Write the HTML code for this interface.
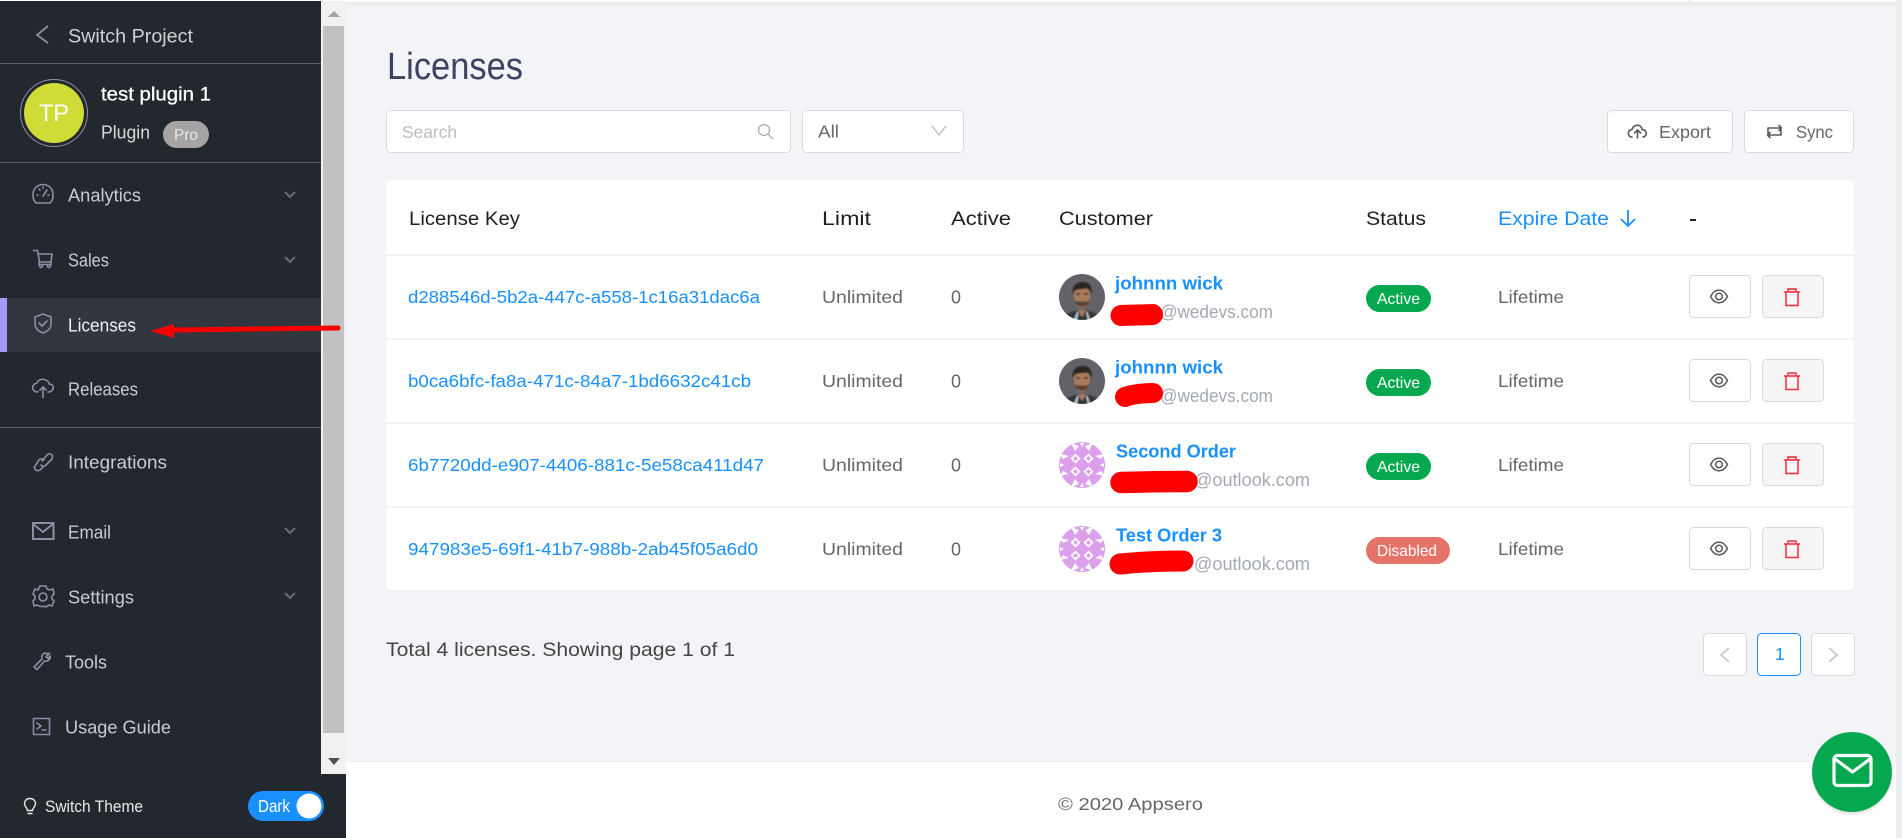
<!DOCTYPE html>
<html lang="en"><head><meta charset="utf-8"><title>Licenses</title>
<style>
html,body{margin:0;padding:0;width:1902px;height:838px;overflow:hidden;background:#f3f4f8}
svg{display:block}
text{font-family:"Liberation Sans",sans-serif;white-space:pre}
.n{font-size:18.500px;fill:#c9cbd2}
.h{font-size:19.500px;fill:#1f1f1f}
.k{font-size:17.500px;fill:#1890ff}
.b{font-size:17.500px;fill:#666}
.nm{font-size:18px;fill:#1890ff;font-weight:700}
.em{font-size:18px;fill:#a3a9b3}
.bd{font-size:16px;fill:#fff}
.ic{fill:none;stroke:#8d8ea6;stroke-width:1.6;stroke-linecap:round;stroke-linejoin:round}
.cv{fill:none;stroke:#6b6d76;stroke-width:2}
.btn{fill:#fff;stroke:#d9d9d9}
.gi{fill:none;stroke:#595959;stroke-width:1.6;stroke-linecap:round;stroke-linejoin:round}
</style></head><body>
<svg width="1902" height="838" viewBox="0 0 1902 838" xmlns="http://www.w3.org/2000/svg">
<defs>
<clipPath id="a1"><circle cx="23" cy="23" r="23"/></clipPath>
<linearGradient id="sh" x1="0" y1="0" x2="0" y2="1"><stop offset="0" stop-color="#e6e6e8"/><stop offset="1" stop-color="#f3f4f8"/></linearGradient>
<filter id="soft" x="-5%" y="-5%" width="110%" height="110%"><feGaussianBlur stdDeviation="0.7"/></filter>
<g id="photo" clip-path="url(#a1)">
<rect width="46" height="46" fill="#626268"/>
<g filter="url(#soft)">
<path d="M4 46L6 41L15 37L31 37L40 41L42 46Z" fill="#33383c"/>
<path d="M15 46L18 38L19.500 38L18 46ZM29 46L27 38L28.500 38L31 46Z" fill="#c5cfd2"/>
<path d="M19 36H27L24 42H22Z" fill="#a87a5c"/>
<ellipse cx="23" cy="22" rx="8" ry="12" fill="#a87a5c"/>
<path d="M13.500 20C13 11 18 8 24 8C31 8 33.500 13 32.500 21C31.500 17 30 15 27 14.500C22 15.500 18 15 15.500 17C15 18 14.500 19 13.500 20Z" fill="#2a2523"/>
<path d="M15.500 26C17 35 29 35 30.500 26C28.500 28 26 27.500 23 27.500C20 27.500 17.500 28 15.500 26Z" fill="#5a4334"/>
<path d="M17 20h4M25 20h4" stroke="#33261f" stroke-width="1.500"/>
</g>
</g>
<g id="ident" clip-path="url(#a1)">
<rect width="46" height="46" fill="#dc9fec"/>
<g fill="#fff">
<path d="M16.500 11.500l5 5-5 5-5-5zM29.500 11.500l5 5-5 5-5-5z"/>
<path d="M16.500 24.500l5 5-5 5-5-5zM29.500 24.500l5 5-5 5-5-5z"/>
<path d="M1 12L10 14L4 17ZM45 12L36 14L42 17ZM1 34L10 32L4 29ZM45 34L36 32L42 29Z"/>
<path d="M12 1L16 9L20 4ZM34 1L30 9L26 4ZM12 45L16 37L20 42ZM34 45L30 37L26 42Z"/>
<path d="M1 21l4 2-4 2zM45 21l-4 2 4 2zM21 1l2 4 2-4zM21 45l2-4 2 4z"/>
</g>
<g fill="#dc9fec"><path d="M16.500 14l2.500 2.500-2.500 2.500-2.500-2.500zM29.500 14l2.500 2.500-2.500 2.500-2.500-2.500zM16.500 27l2.500 2.500-2.500 2.500-2.500-2.500zM29.500 27l2.500 2.500-2.500 2.500-2.500-2.500z"/></g>
</g>
<g id="eye" class="gi" style="stroke-width:1.500"><path d="M-8.500 0C-4-8.500 4-8.500 8.500 0C4 8.500-4 8.500-8.500 0Z"/><circle cx="0" cy="0" r="3.300"/></g>
<g id="trash" fill="none" stroke="#ff2a3a" stroke-width="1.500"><path d="M-8-5H8M-6-5V8.500H6V-5M-4-5V-8H4V-5"/></g>
</defs>

<!-- main background -->
<rect x="346" y="0" width="1556" height="838" fill="#f3f4f8"/>
<rect x="346" y="0" width="1556" height="9" fill="url(#sh)"/>
<rect x="346" y="0" width="1556" height="2" fill="#fff"/>
<rect x="1689" y="0" width="1" height="2" fill="#d8d8d8"/>
<rect x="1896" y="0" width="6" height="838" fill="#efefef"/>

<!-- sidebar -->
<rect width="346" height="838" fill="#23272e"/>
<rect width="346" height="1" fill="#fff"/>
<rect x="321" y="1" width="25" height="773" fill="#f1f1f1"/>
<rect x="323" y="26" width="21" height="707" fill="#c1c1c1"/>
<path d="M328 17l6-6 6 6z" fill="#a3a3a3"/>
<path d="M328 758l6 7 6-7z" fill="#505050"/>
<rect y="63" width="321" height="1" fill="#5a5d6c"/>
<rect y="162" width="321" height="1" fill="#5a5d6c"/>
<rect y="427" width="321" height="1" fill="#62656e"/>

<path d="M48 26L37 35L48 43" fill="none" stroke="#8d8ea6" stroke-width="1.800"/>
<text x="68" y="42.500" textLength="125" lengthAdjust="spacingAndGlyphs" style="font-size:19px;fill:#d0d1d6">Switch Project</text>
<circle cx="54" cy="113" r="33.500" fill="none" stroke="#8f90a6" stroke-width="1"/>
<circle cx="54" cy="113" r="30" fill="#cfdb37"/>
<text x="39" y="121" textLength="30" lengthAdjust="spacingAndGlyphs" style="font-size:24px;fill:#fff">TP</text>
<text x="101" y="100.500" textLength="110" lengthAdjust="spacingAndGlyphs" style="font-size:19.500px;fill:#fff;stroke:#fff;stroke-width:.3">test plugin 1</text>
<text x="101" y="138.500" textLength="49" lengthAdjust="spacingAndGlyphs" style="font-size:18.500px;fill:#d8d9dd">Plugin</text>
<rect x="163" y="121" width="46" height="27" rx="13.500" fill="#a5a3a3"/>
<text x="174" y="140" textLength="24" lengthAdjust="spacingAndGlyphs" style="font-size:16px;fill:#e8e8e8">Pro</text>

<rect y="298" width="321" height="54" fill="#32363f"/>
<rect y="298" width="7" height="54" fill="#a29bfd"/>

<text class="n" x="68" y="201.500" textLength="73" lengthAdjust="spacingAndGlyphs">Analytics</text>
<text class="n" x="68" y="266.500" textLength="41" lengthAdjust="spacingAndGlyphs">Sales</text>
<text x="68" y="331.500" textLength="68" lengthAdjust="spacingAndGlyphs" style="font-size:18.500px;fill:#f0f0f2">Licenses</text>
<text class="n" x="68" y="395.500" textLength="70" lengthAdjust="spacingAndGlyphs">Releases</text>
<text class="n" x="68" y="468.500" textLength="99" lengthAdjust="spacingAndGlyphs">Integrations</text>
<text class="n" x="68" y="538.500" textLength="43" lengthAdjust="spacingAndGlyphs">Email</text>
<text class="n" x="68" y="603.500" textLength="66" lengthAdjust="spacingAndGlyphs">Settings</text>
<text class="n" x="65" y="668.500" textLength="42" lengthAdjust="spacingAndGlyphs">Tools</text>
<text class="n" x="65" y="733.500" textLength="106" lengthAdjust="spacingAndGlyphs">Usage Guide</text>

<path class="cv" d="M285 192l5 5 5-5M285 257l5 5 5-5M285 528l5 5 5-5M285 593l5 5 5-5"/>

<!-- analytics -->
<g class="ic"><path d="M36 203C33 200 33 197 33 194.500C33 188 38 184.500 43 184.500C48 184.500 53 188 53 194.500C53 198 53 200 50 203Z"/><path d="M43 196L47 190M37 195h1M48 195h1M39 189l1 1M43 187v1"/></g>
<!-- cart -->
<g class="ic"><path d="M33.500 250.500H37.500L39.500 262H51L52 254H38.500M39 262V264.500H51V262"/><circle cx="41" cy="266" r="1.500"/><circle cx="49" cy="266" r="1.500"/></g>
<!-- shield -->
<g class="ic"><path d="M43 314L51 317V324C51 329 47 331.500 43 333C39 331.500 35 329 35 324V317Z"/><path d="M39 323l3 3 5-5"/></g>
<!-- cloud up -->
<g class="ic"><path d="M38 392C33 392 32 388 33 386C34 384 36 383 37 383C38 380 41 379 44 379.500C47 380 49 382 49 384C52 384 54 386 53 389C52 391 50 392 48 392M43 397.500V387M40 390l3-3 3 3"/></g>
<!-- link -->
<g class="ic"><path d="M42 461L47 455C50 452 54 455 52 459L46 465C44 467 42 466 41 465M44 460C42 458 40 459 39 460L35 466C33 469 37 472 40 470L43 467"/></g>
<!-- mail -->
<g fill="none" stroke="#8d8ea6" stroke-width="2"><rect x="33" y="523" width="20.500" height="16"/><path d="M33 524L43 532L53 524"/></g>
<!-- gear -->
<g class="ic"><path d="M40 586H46L47 589L50 590L53 589L54 594L52 596L52 599L54 601L52 606L49 605L46 607L45 606.500H41L39 606L37 605L34 606L33 601L35 599V596L33 594L35 589L38 590Z"/><circle cx="43" cy="597" r="4"/></g>
<!-- wrench -->
<g class="ic"><path d="M34 667L42 659C41 655 44 652 46 653.500L49.500 653.500L46 656.500L48 658.500L50 656C51 659 48 662 44.500 661L37 669.500Z"/></g>
<!-- terminal -->
<g class="ic"><rect x="33.500" y="718.500" width="16" height="16" stroke-linecap="butt"/><path d="M37 723l4 3-4 3M42 730h4"/></g>

<!-- theme -->
<g fill="none" stroke="#e8e8ea" stroke-width="1.400"><path d="M27.500 810.500C27 807.500 24.500 806.500 24.500 803.500C24.500 800.500 27 798.500 30 798.500C33 798.500 35.500 800.500 35.500 803.500C35.500 806.500 33 807.500 32.500 810.500ZM27.500 813.500H32.500"/></g>
<text x="45" y="812" textLength="98" lengthAdjust="spacingAndGlyphs" style="font-size:16.500px;fill:#e8e8ea">Switch Theme</text>
<rect x="248" y="791" width="76" height="30" rx="15" fill="#1890ff"/>
<text x="258" y="812" textLength="32" lengthAdjust="spacingAndGlyphs" style="font-size:17.500px;fill:#fff">Dark</text>
<circle cx="309" cy="806" r="12.500" fill="#fff"/>

<!-- red arrow -->
<path d="M173 330L338 328" stroke="#f50000" stroke-width="5" stroke-linecap="round"/>
<path d="M150 331L174 324V338Z" fill="#f50000"/>

<!-- heading + filters -->
<text x="387" y="79" textLength="136" lengthAdjust="spacingAndGlyphs" style="font-size:38px;fill:#40425f">Licenses</text>
<rect class="btn" x="386.500" y="110.500" width="404" height="42" rx="4"/>
<text x="402" y="138" textLength="55" lengthAdjust="spacingAndGlyphs" style="font-size:17.500px;fill:#bcbcbc">Search</text>
<g fill="none" stroke="#b5b5b5" stroke-width="1.500"><circle cx="764" cy="130" r="5.500"/><path d="M768 134l5 5"/></g>
<rect class="btn" x="802.500" y="110.500" width="161" height="42" rx="4"/>
<text x="818" y="137.500" textLength="21" lengthAdjust="spacingAndGlyphs" style="font-size:17.500px;fill:#666">All</text>
<path d="M932 126l7 9 7-9" fill="none" stroke="#bbb" stroke-width="1.300"/>

<rect class="btn" x="1607.500" y="110.500" width="125" height="42" rx="4"/>
<path class="gi" d="M1632 137C1628 137 1628 133 1629 131C1630 130 1631 129.500 1632 129.500C1633 126 1636 124.500 1639 125.500C1641 126 1642 128 1642 129.500C1645 129.500 1647 132 1646 135C1645 136.500 1644 137 1643 137M1637.500 138V130M1634.500 133l3-3 3 3"/>
<text x="1659" y="138" textLength="52" lengthAdjust="spacingAndGlyphs" style="font-size:17.500px;fill:#666">Export</text>
<rect class="btn" x="1744.500" y="110.500" width="109" height="42" rx="4"/>
<path class="gi" d="M1768 133V128H1781M1779 125.500l2.500 2.500-2.500 2.500M1781 130V135H1768M1770 132.500l-2.500 2.500 2.500 2.500"/>
<text x="1796" y="138" textLength="37" lengthAdjust="spacingAndGlyphs" style="font-size:17.500px;fill:#666">Sync</text>

<!-- card -->
<rect x="386" y="180" width="1468" height="411" rx="4" fill="#fff"/>
<rect x="386" y="254" width="1468" height="2" fill="#f0f0f5"/>
<rect x="386" y="338" width="1468" height="2" fill="#f0f0f5"/>
<rect x="386" y="422" width="1468" height="2" fill="#f0f0f5"/>
<rect x="386" y="506" width="1468" height="2" fill="#f0f0f5"/>
<rect x="386" y="590" width="1468" height="2" fill="#f0f0f5"/>

<text class="h" x="409" y="225" textLength="111" lengthAdjust="spacingAndGlyphs">License Key</text>
<text class="h" x="822" y="225" textLength="49" lengthAdjust="spacingAndGlyphs">Limit</text>
<text class="h" x="951" y="225" textLength="60" lengthAdjust="spacingAndGlyphs">Active</text>
<text class="h" x="1059" y="225" textLength="94" lengthAdjust="spacingAndGlyphs">Customer</text>
<text class="h" x="1366" y="225" textLength="60" lengthAdjust="spacingAndGlyphs">Status</text>
<text x="1498" y="225" textLength="111" lengthAdjust="spacingAndGlyphs" style="font-size:19.500px;fill:#1890ff">Expire Date</text>
<path d="M1628 210V226M1621 219L1628 226L1635 219" fill="none" stroke="#1890ff" stroke-width="1.800"/>
<rect x="1690" y="219" width="6" height="2" fill="#222"/>

<!-- row 1 -->
<text class="k" x="408" y="303" textLength="352" lengthAdjust="spacingAndGlyphs">d288546d-5b2a-447c-a558-1c16a31dac6a</text>
<text class="b" x="822" y="303" textLength="81" lengthAdjust="spacingAndGlyphs">Unlimited</text>
<text class="b" x="951" y="303.500" textLength="10" lengthAdjust="spacingAndGlyphs" style="font-size:18.500px">0</text>
<use href="#photo" x="1059" y="274"/>
<text class="nm" x="1115" y="289.500" textLength="108" lengthAdjust="spacingAndGlyphs">johnnn wick</text>
<text class="em" x="1160" y="318" textLength="113" lengthAdjust="spacingAndGlyphs">@wedevs.com</text>
<path d="M1121 315.500C1130 315 1146 315 1152.500 314.500" stroke="#f00" stroke-width="21" stroke-linecap="round" fill="none"/>
<rect x="1366" y="285" width="65" height="27" rx="13.500" fill="#05a84f"/>
<text class="bd" x="1377" y="304" textLength="43" lengthAdjust="spacingAndGlyphs">Active</text>
<text class="b" x="1498" y="303" textLength="66" lengthAdjust="spacingAndGlyphs">Lifetime</text>
<rect class="btn" x="1689.500" y="275.500" width="61" height="42" rx="4"/>
<use href="#eye" x="1719" y="296.500"/>
<rect x="1762.500" y="275.500" width="61" height="42" rx="4" fill="#f5f5f5" stroke="#d9d9d9"/>
<use href="#trash" x="1792" y="297"/>

<!-- row 2 -->
<text class="k" x="408" y="387" textLength="343" lengthAdjust="spacingAndGlyphs">b0ca6bfc-fa8a-471c-84a7-1bd6632c41cb</text>
<text class="b" x="822" y="387" textLength="81" lengthAdjust="spacingAndGlyphs">Unlimited</text>
<text class="b" x="951" y="387.500" textLength="10" lengthAdjust="spacingAndGlyphs" style="font-size:18.500px">0</text>
<use href="#photo" x="1059" y="358"/>
<text class="nm" x="1115" y="373.500" textLength="108" lengthAdjust="spacingAndGlyphs">johnnn wick</text>
<text class="em" x="1160" y="402" textLength="113" lengthAdjust="spacingAndGlyphs">@wedevs.com</text>
<path d="M1125 397C1132 394 1146 393 1153 393" stroke="#f00" stroke-width="20" stroke-linecap="round" fill="none"/>
<rect x="1366" y="369" width="65" height="27" rx="13.500" fill="#05a84f"/>
<text class="bd" x="1377" y="388" textLength="43" lengthAdjust="spacingAndGlyphs">Active</text>
<text class="b" x="1498" y="387" textLength="66" lengthAdjust="spacingAndGlyphs">Lifetime</text>
<rect class="btn" x="1689.500" y="359.500" width="61" height="42" rx="4"/>
<use href="#eye" x="1719" y="380.500"/>
<rect x="1762.500" y="359.500" width="61" height="42" rx="4" fill="#f5f5f5" stroke="#d9d9d9"/>
<use href="#trash" x="1792" y="381"/>

<!-- row 3 -->
<text class="k" x="408" y="471" textLength="356" lengthAdjust="spacingAndGlyphs">6b7720dd-e907-4406-881c-5e58ca411d47</text>
<text class="b" x="822" y="471" textLength="81" lengthAdjust="spacingAndGlyphs">Unlimited</text>
<text class="b" x="951" y="471.500" textLength="10" lengthAdjust="spacingAndGlyphs" style="font-size:18.500px">0</text>
<use href="#ident" x="1059" y="442"/>
<text class="nm" x="1116" y="457.500" textLength="120" lengthAdjust="spacingAndGlyphs">Second Order</text>
<text class="em" x="1194" y="486" textLength="116" lengthAdjust="spacingAndGlyphs">@outlook.com</text>
<path d="M1121 482.500C1140 482 1172 481.500 1187 481.500" stroke="#f00" stroke-width="21.500" stroke-linecap="round" fill="none"/>
<rect x="1366" y="453" width="65" height="27" rx="13.500" fill="#05a84f"/>
<text class="bd" x="1377" y="472" textLength="43" lengthAdjust="spacingAndGlyphs">Active</text>
<text class="b" x="1498" y="471" textLength="66" lengthAdjust="spacingAndGlyphs">Lifetime</text>
<rect class="btn" x="1689.500" y="443.500" width="61" height="42" rx="4"/>
<use href="#eye" x="1719" y="464.500"/>
<rect x="1762.500" y="443.500" width="61" height="42" rx="4" fill="#f5f5f5" stroke="#d9d9d9"/>
<use href="#trash" x="1792" y="465"/>

<!-- row 4 -->
<text class="k" x="408" y="555" textLength="350" lengthAdjust="spacingAndGlyphs">947983e5-69f1-41b7-988b-2ab45f05a6d0</text>
<text class="b" x="822" y="555" textLength="81" lengthAdjust="spacingAndGlyphs">Unlimited</text>
<text class="b" x="951" y="555.500" textLength="10" lengthAdjust="spacingAndGlyphs" style="font-size:18.500px">0</text>
<use href="#ident" x="1059" y="526"/>
<text class="nm" x="1116" y="541.500" textLength="106" lengthAdjust="spacingAndGlyphs">Test Order 3</text>
<text class="em" x="1194" y="570" textLength="116" lengthAdjust="spacingAndGlyphs">@outlook.com</text>
<path d="M1120 564C1140 562 1165 561 1183 561" stroke="#f00" stroke-width="21" stroke-linecap="round" fill="none"/>
<rect x="1366" y="537" width="84" height="27" rx="13.500" fill="#e57368"/>
<text class="bd" x="1377" y="556" textLength="60" lengthAdjust="spacingAndGlyphs">Disabled</text>
<text class="b" x="1498" y="555" textLength="66" lengthAdjust="spacingAndGlyphs">Lifetime</text>
<rect class="btn" x="1689.500" y="527.500" width="61" height="42" rx="4"/>
<use href="#eye" x="1719" y="548.500"/>
<rect x="1762.500" y="527.500" width="61" height="42" rx="4" fill="#f5f5f5" stroke="#d9d9d9"/>
<use href="#trash" x="1792" y="549"/>

<!-- pagination -->
<text x="386" y="656" textLength="349" lengthAdjust="spacingAndGlyphs" style="font-size:19.500px;fill:#444">Total 4 licenses. Showing page 1 of 1</text>
<rect class="btn" x="1703.500" y="633.500" width="43" height="42" rx="4"/>
<path d="M1729 648L1721 655L1729 662" fill="none" stroke="#c4c4c4" stroke-width="1.600"/>
<rect x="1757.500" y="633.500" width="43" height="42" rx="4" fill="#fff" stroke="#1890ff"/>
<text x="1775" y="660" style="font-size:17.500px;fill:#1890ff">1</text>
<rect class="btn" x="1811.500" y="633.500" width="43" height="42" rx="4"/>
<path d="M1829 648L1837 655L1829 662" fill="none" stroke="#c4c4c4" stroke-width="1.600"/>

<!-- footer -->
<rect x="346" y="762" width="1550" height="76" fill="#fff"/>
<rect x="346" y="761" width="1550" height="1" fill="#ebebeb"/>
<text x="1058" y="810" textLength="145" lengthAdjust="spacingAndGlyphs" style="font-size:17.500px;fill:#666">© 2020 Appsero</text>

<!-- FAB -->
<circle cx="1852" cy="775" r="40" fill="#000" opacity=".08"/>
<circle cx="1852" cy="772" r="40" fill="#05a84f"/>
<g fill="none" stroke="#fff" stroke-width="3.200" stroke-linejoin="round"><rect x="1834" y="755.500" width="37" height="30" rx="3.500"/><path d="M1835 759L1852.500 772L1870 759"/></g>
</svg>
</body></html>
